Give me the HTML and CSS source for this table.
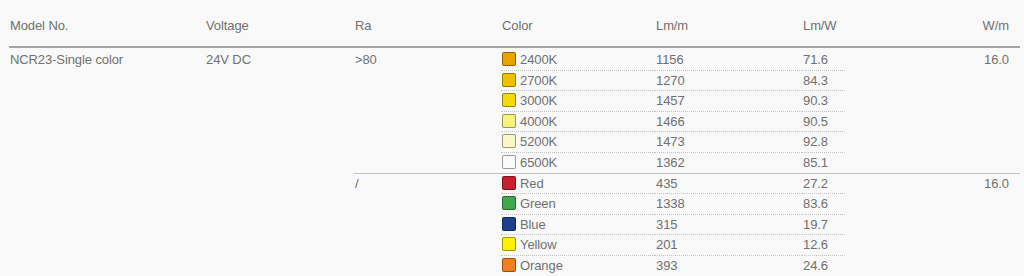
FILE: index.html
```html
<!DOCTYPE html>
<html>
 <head>
  <meta charset="utf-8">
  <title>NCR23 specifications</title>
  <link rel="stylesheet" href="styles.css">
 </head>
 <body>
  <div class="wrap">
   <table class="spec">
    <colgroup>
     <col class="c-model">
     <col class="c-volt">
     <col class="c-ra">
     <col class="c-color">
     <col class="c-lmm">
     <col class="c-lmw">
     <col class="c-wm">
    </colgroup>
    <thead>
     <tr>
      <th>Model No.</th>
      <th>Voltage</th>
      <th>Ra</th>
      <th>Color</th>
      <th>Lm/m</th>
      <th>Lm/W</th>
      <th class="num">W/m</th>
     </tr>
    </thead>
    <tbody>
     <tr class="first">
      <td rowspan="11" class="span">NCR23-Single color</td>
      <td rowspan="11" class="span">24V DC</td>
      <td rowspan="6" class="span group-end">&gt;80</td>
      <td class="dot"><span class="sw k2400"></span>2400K</td>
      <td class="dot">1156</td>
      <td class="dot">71.6</td>
      <td rowspan="6" class="span group-end num">16.0</td>
     </tr>
     <tr>
      <td class="dot"><span class="sw k2700"></span>2700K</td>
      <td class="dot">1270</td>
      <td class="dot">84.3</td>
     </tr>
     <tr>
      <td class="dot"><span class="sw k3000"></span>3000K</td>
      <td class="dot">1457</td>
      <td class="dot">90.3</td>
     </tr>
     <tr>
      <td class="dot"><span class="sw k4000"></span>4000K</td>
      <td class="dot">1466</td>
      <td class="dot">90.5</td>
     </tr>
     <tr>
      <td class="dot"><span class="sw k5200"></span>5200K</td>
      <td class="dot">1473</td>
      <td class="dot">92.8</td>
     </tr>
     <tr>
      <td class="group-end"><span class="sw k6500"></span>6500K</td>
      <td class="group-end">1362</td>
      <td class="group-end">85.1</td>
     </tr>
     <tr>
      <td rowspan="5" class="span">/</td>
      <td class="dot"><span class="sw red"></span>Red</td>
      <td class="dot">435</td>
      <td class="dot">27.2</td>
      <td rowspan="5" class="span num">16.0</td>
     </tr>
     <tr>
      <td class="dot"><span class="sw green"></span>Green</td>
      <td class="dot">1338</td>
      <td class="dot">83.6</td>
     </tr>
     <tr>
      <td class="dot"><span class="sw blue"></span>Blue</td>
      <td class="dot">315</td>
      <td class="dot">19.7</td>
     </tr>
     <tr>
      <td class="dot"><span class="sw yellow"></span>Yellow</td>
      <td class="dot">201</td>
      <td class="dot">12.6</td>
     </tr>
     <tr>
      <td class="dot"><span class="sw orange"></span>Orange</td>
      <td class="dot">393</td>
      <td class="dot">24.6</td>
     </tr>
    </tbody>
   </table>
  </div>
 </body>
</html>
```

FILE: styles.css
```css
html, body {
    margin: 0;
    background: #f9f9f9;
}
.wrap {
    padding: 0 4px 0 9px;
}
.spec {
    width: 1011px;
    border-collapse: separate;
    border-spacing: 0;
    table-layout: fixed;
    font-family: "Liberation Sans", Arial, sans-serif;
    font-size: 13px;
    line-height: 16px;
    letter-spacing: -0.1px;
    color: #707070;
}
.c-model { width: 196px; }
.c-volt  { width: 149px; }
.c-ra    { width: 147px; }
.c-color { width: 154px; }
.c-lmm   { width: 147px; }
.c-lmw   { width: 43px; }
.c-wm    { width: 175px; }

.spec th {
    font-weight: normal;
    text-align: left;
    padding: 18px 0 12px 1px;
    border-bottom: 2px solid #a3a3a3;
}
.spec td {
    text-align: left;
    vertical-align: top;
    padding: 2px 0 1.6px 1px;
    white-space: nowrap;
}
.spec td.dot {
    border-bottom: 1px dotted #c2c2c2;
}
.spec td.group-end {
    border-bottom: 1px solid #c0c0c0;
}
.spec tr.first td {
    padding-top: 4px;
}
.spec .num {
    text-align: right;
    padding-right: 11px;
}
.spec th.num {
    padding-right: 11px;
}

.sw {
    display: inline-block;
    width: 14px;
    height: 14px;
    box-sizing: border-box;
    margin: 0 4px 0 0;
    vertical-align: -2px;
    border-radius: 2px;
    border: 1px solid rgba(0, 0, 0, 0.38);
}
.k2400  { background: #e9a300; }
.k2700  { background: #efc200; }
.k3000  { background: #f1d90f; }
.k4000  { background: #f7f47e; }
.k5200  { background: #f9f7c3; }
.k6500  { background: #fbfbfb; }
.red    { background: #cc1f2b; }
.green  { background: #3fa84a; }
.blue   { background: #1f3f8f; }
.yellow { background: #fff200; }
.orange { background: #f07f1f; }
```
